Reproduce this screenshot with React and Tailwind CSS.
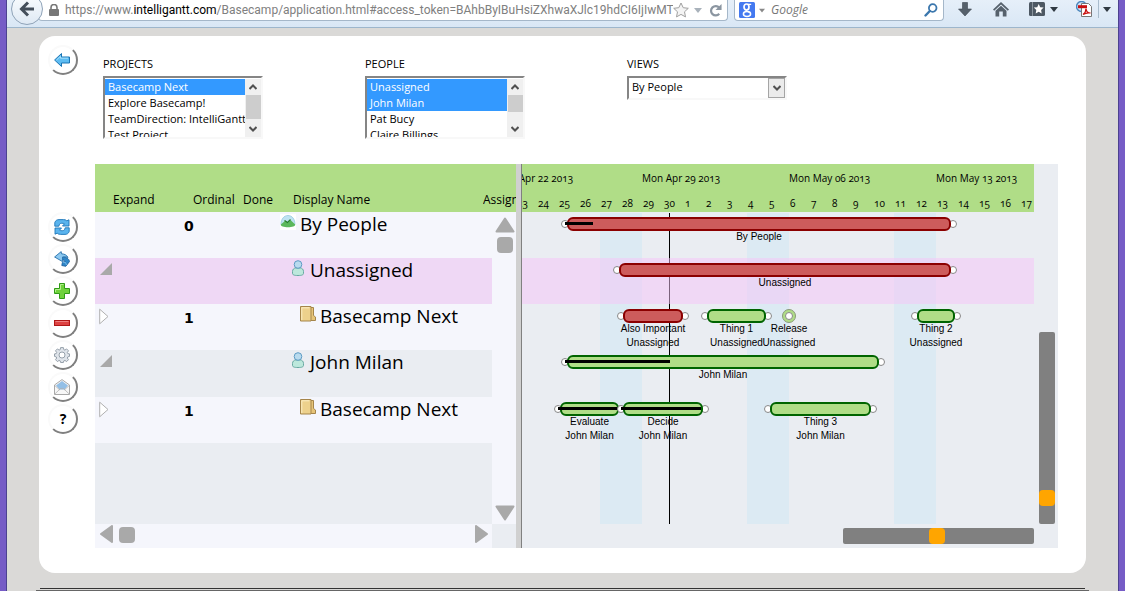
import { useState } from 'react';

const BAR_H = 14;

const projects = ['Basecamp Next', 'Explore Basecamp!', 'TeamDirection: IntelliGantt', 'Test Project'];
const people = ['Unassigned', 'John Milan', 'Pat Bucy', 'Claire Billings'];

const rows = [
  { name: 'By People', icon: 'chart', level: 0, ordinal: '0', bg: 'bg-[#f5f6fc]', height: 'h-[46px]' },
  { name: 'Unassigned', icon: 'person', level: 1, expand: 'open', bg: 'bg-[#efd8f5]', height: 'h-[46px]' },
  { name: 'Basecamp Next', icon: 'project', level: 2, ordinal: '1', expand: 'closed', bg: 'bg-[#f5f6fc]', height: 'h-[46px]' },
  { name: 'John Milan', icon: 'person', level: 1, expand: 'open', bg: 'bg-[#eaedf2]', height: 'h-[47px]' },
  { name: 'Basecamp Next', icon: 'project', level: 2, ordinal: '1', expand: 'closed', bg: 'bg-[#f5f6fc]', height: 'h-[46px]' },
];

const weeks = [
  { label: 'Mon Apr 22 2013', x: -27 },
  { label: 'Mon Apr 29 2013', x: 120 },
  { label: 'Mon May 06 2013', x: 267 },
  { label: 'Mon May 13 2013', x: 414 },
];

const days = [23, 24, 25, 26, 27, 28, 29, 30, 1, 2, 3, 4, 5, 6, 7, 8, 9, 10, 11, 12, 13, 14, 15, 16, 17];
const weekends = [78, 225, 372];

// x and width are in timeline pixels, done is the length of the progress line
const taskRows = [
  [{ name: 'By People', x: 45, width: 384, late: true, done: 28 }],
  [{ name: 'Unassigned', x: 97, width: 332, late: true }],
  [
    { name: 'Also Important', who: 'Unassigned', x: 101, width: 60, late: true },
    { name: 'Thing 1', who: 'Unassigned', x: 185, width: 59 },
    { name: 'Release', who: 'Unassigned', x: 260, width: 14, milestone: true },
    { name: 'Thing 2', who: 'Unassigned', x: 395, width: 38 },
  ],
  [{ name: 'John Milan', x: 45, width: 312, done: 105 }],
  [
    { name: 'Evaluate', who: 'John Milan', x: 38, width: 59, done: 60 },
    { name: 'Decide', who: 'John Milan', x: 101, width: 80, done: 80 },
    { name: 'Thing 3', who: 'John Milan', x: 248, width: 101 },
  ],
];

const indent = ['pl-0', 'pl-[10px]', 'pl-5'];

function Caret({ className }) {
  return (
    <svg viewBox="0 0 8 5" className={`h-[5px] w-2 ${className || ''}`} fill="currentColor">
      <path d="M0 0h8L4 5z" />
    </svg>
  );
}

function Chevron({ up }) {
  return (
    <svg viewBox="0 0 8 6" className="h-[6px] w-2" fill="none" stroke="#505050" strokeWidth="2">
      <path d={up ? 'M0.5 5 4 1.5 7.5 5' : 'M0.5 1 4 4.500 7.500 1'} />
    </svg>
  );
}

function BrowserBar() {
  return (
    <header className="flex h-7 items-start border-b border-[#9db6cc] bg-linear-to-b from-[#e6eff9] to-[#d9e7f5] pl-1 text-xs">
      <button aria-label="Back" className="z-10 -mt-[7px] flex h-8 w-8 shrink-0 items-center justify-center rounded-full border border-[#8fa3b8] bg-linear-to-b from-[#fbfdff] to-[#dfe9f4]">
        <svg viewBox="0 0 16 16" className="h-4 w-4" fill="none" stroke="#454f5b" strokeWidth="3">
          <path d="M15 8H3M9 1.500 2.500 8 9 14.500" />
        </svg>
      </button>
      <div className="-ml-[5px] flex h-[21px] min-w-0 flex-1 items-center rounded-b-sm border border-t-0 border-[#a5b7c9] bg-white pl-[10px]">
        <svg viewBox="0 0 10 12" className="mr-[6px] -mt-[1px] h-3 w-[10px] shrink-0">
          <path d="M2 6V3.500a3 3 0 0 1 6 0V6" fill="none" stroke="#777" strokeWidth="1.600" />
          <rect y="5" width="10" height="7" rx="1" fill="#777" />
        </svg>
        <div role="textbox" aria-label="Address" tabIndex={0} className="min-w-0 flex-1 overflow-hidden whitespace-nowrap font-[Roboto,sans-serif] leading-4 text-[#808080]">
          https://www.<span className="text-black">intelligantt.com</span>/Basecamp/application.html#access_token=BAhbByIBuHsiZXhwaXJlc19hdCI6IjIwMT
        </div>
        <svg viewBox="0 0 16 16" className="h-4 w-4 shrink-0" fill="#f4f4f4" stroke="#a0a0a0" strokeWidth="1">
          <path d="m8 1 2.200 4.700 5.100.6-3.800 3.500 1 5.100L8 12.400l-4.500 2.500 1-5.100L.7 6.300l5.100-.6z" />
        </svg>
        <Caret className="ml-[5px] shrink-0 text-[#a9b2bb]" />
        <svg viewBox="0 0 14 14" className="mr-[5px] ml-[7px] h-[13px] w-[13px] shrink-0" fill="none" stroke="#8b96a1" strokeWidth="2.400">
          <path d="M11 10.500A5 5 0 1 1 11 4" />
          <path d="M13.500 0v6.500H7z" fill="#8b96a1" stroke="none" />
        </svg>
      </div>
      <div className="ml-[6px] flex h-[21px] w-[210px] shrink-0 items-center rounded-b-sm border border-t-0 border-[#a5b7c9] bg-white pl-1">
        <svg viewBox="0 0 16 16" className="h-4 w-4 shrink-0">
          <rect width="16" height="16" rx="1.500" fill="#4479f0" />
          <g fill="none" stroke="#fff">
            <ellipse cx="7.500" cy="5" rx="2.500" ry="3" strokeWidth="1.700" />
            <ellipse cx="8" cy="12" rx="3.600" ry="2.400" strokeWidth="1.500" />
            <path d="M9 2.300h3.200M8 8c-2 1 1.500 1.200 2.600 2.500" strokeWidth="1.200" />
          </g>
        </svg>
        <Caret className="ml-1 w-[6px] text-[#888]" />
        <input aria-label="Search" placeholder="Google" className="ml-[6px] w-0 min-w-0 flex-1 bg-transparent font-['Open_Sans',sans-serif] text-xs italic leading-4 outline-none placeholder:text-[#777]" />
        <svg viewBox="0 0 14 14" className="mr-[5px] h-[14px] w-[14px] shrink-0" fill="none" stroke="#3b77ad" strokeLinecap="round">
          <circle cx="8.700" cy="5" r="3.800" strokeWidth="1.800" />
          <path d="M5.800 8 1.500 12.500" strokeWidth="2.400" />
        </svg>
      </div>
      <nav className="flex h-[18px] shrink-0 items-center text-[#2f3942]">
        <button aria-label="Downloads" className="ml-[14px]">
          <svg viewBox="0 0 14 15" className="h-[15px] w-[14px]" fill="#56616c" stroke="#3d4751" strokeWidth="0.600">
            <path d="M4.500.5h5v6.500h4L7 14 .5 7h4z" />
          </svg>
        </button>
        <button aria-label="Home" className="ml-[21px]">
          <svg viewBox="0 0 16 15" className="h-[15px] w-4" fill="#56616c">
            <path d="m8 0 8 7.500-1.200 1.200L8 2.400 1.200 8.700 0 7.500z" />
            <path d="m8 3.800 5.500 5V14.500h-3.700V9.500H6.200v5H2.500V8.800z" />
          </svg>
        </button>
        <button aria-label="Bookmarks" className="ml-5 flex items-center gap-[5px]">
          <svg viewBox="0 0 16 14" className="h-[14px] w-4">
            <rect width="16" height="14" rx="1.500" fill="#4d5863" />
            <path d="M3.500 0v14" stroke="#8a949d" />
            <path d="m9.700 2 1.500 3.200 3.400.4-2.500 2.400.6 3.500-3-1.700-3 1.700.6-3.500-2.500-2.400 3.400-.4z" fill="#fff" />
          </svg>
          <Caret />
        </button>
        <button aria-label="PDF tools" className="ml-[18px]">
          <svg viewBox="0 0 16 16" className="h-4 w-4">
            <circle cx="5.500" cy="5.500" r="5" fill="#cfe3f5" stroke="#4b86bd" strokeWidth="1.400" />
            <path d="M5.500 2.500h7l3 3v10h-10z" fill="#fff" stroke="#777" />
            <path d="M2 4.200h9v3H2z" fill="#c80f0f" />
            <path d="M7 13.500c2-1.500 3-4 3-6 .3 3 2.300 4.500 4.500 4.500-2.500-.5-5 0-7.500 1.500z" fill="none" stroke="#c80f0f" strokeWidth="1.200" />
          </svg>
        </button>
        <span className="ml-[6px] h-[18px] w-px bg-[#a9bccd]" />
        <button aria-label="More" className="mr-[7px] ml-1">
          <Caret />
        </button>
      </nav>
    </header>
  );
}

function ListBox({ id, label, options, selected, thumb }) {
  const [value, setValue] = useState(selected);
  return (
    <div className="w-40">
      <label htmlFor={id} className="mb-1 block leading-4">{label}</label>
      <div className="flex h-[63px] overflow-hidden border-2 border-t-[#858585] border-r-[#f8f8f8] border-b-[#f8f8f8] border-l-[#858585] bg-white pt-px">
        <select
          id={id}
          multiple
          value={value}
          onChange={(e) => setValue([...e.target.selectedOptions].map((o) => o.value))}
          className="h-16 min-w-0 flex-1 overflow-hidden text-[11px] outline-none [scrollbar-width:none]"
        >
          {options.map((o) => (
            <option
              key={o}
              className="h-4 min-h-4 py-0 pr-0 pl-[3px] leading-4 checked:bg-[linear-gradient(#3399ff,#3399ff)] checked:[-webkit-text-fill-color:#fff]"
            >
              {o}
            </option>
          ))}
        </select>
        <div className="flex w-4 flex-col items-center bg-[#f0f0f0]">
          <span className="flex h-4 items-center"><Chevron up /></span>
          <span className={`w-[15px] bg-[#cdcdcd] ${thumb}`} />
          <span className="mt-auto flex h-4 items-center"><Chevron /></span>
        </div>
      </div>
    </div>
  );
}

function ViewSelect() {
  return (
    <div className="w-40">
      <label htmlFor="views" className="mb-1 block leading-4">VIEWS</label>
      <div className="relative h-6 border-2 border-t-[#858585] border-r-[#f8f8f8] border-b-[#f8f8f8] border-l-[#858585]">
        <select id="views" className="block h-[18px] w-full appearance-none bg-white pl-[3px] text-[11px] outline-none">
          <option>By People</option>
        </select>
        <span className="pointer-events-none absolute top-0 right-0 flex h-5 w-[17px] items-center justify-center border border-[#a5a5a5] bg-[#ebebeb]">
          <Chevron />
        </span>
      </div>
    </div>
  );
}

function ToolButton({ label, children }) {
  return (
    <button
      aria-label={label}
      className="flex h-[30px] w-[30px] items-center justify-center rounded-full border-2 border-t-[#fafafa] border-r-[#808080] border-b-[#808080] border-l-[#fafafa] pr-[2px]"
    >
      {children}
    </button>
  );
}

function BackIcon() {
  return (
    <svg viewBox="0 0 16 16" className="h-4 w-4">
      <path d="M.6 8 7.500 1.500V5h8v6h-8v3.500z" fill="#5dbcf2" stroke="#1a74b4" />
      <path d="M2.500 8 6.500 4.300V6.200H14" fill="none" stroke="#a9e0fb" />
    </svg>
  );
}

function RefreshIcon() {
  return (
    <svg viewBox="0 0 16 16" className="h-4 w-4" fill="#5ab4ee" stroke="#1f76b8" strokeWidth="0.900" strokeLinejoin="round">
      <path d="M.8 7.200V3.500C1.500 1.500 3 .6 5 .6h4.500c1.500 0 2.500.4 3.300 1.200l2.200-1V7H8.500l2-2.200C9 4 6.500 4 5.500 5.200L4.800 7.200z" />
      <path d="M15.200 8.800v3.700c-.7 2-2.200 2.900-4.200 2.900H6.500c-1.500 0-2.500-.4-3.300-1.200l-2.200 1V9h6.500l-2 2.200c1.500.8 4 .8 5-.4l.7-2z" />
    </svg>
  );
}

function UndoIcon() {
  return (
    <svg viewBox="0 0 16 16" className="h-4 w-4" strokeLinejoin="round">
      <path d="M7.500 5.500c4 .3 7.500 1.800 8 5l-3.700 4.800-4-.8.7-3.500 2.500-.2c0-1.300-1.500-2-3.500-2z" fill="#2f87c9" stroke="#1c5f9c" strokeWidth="0.900" />
      <path d="M.6 6 7.200.6l.3 2.200c3 .2 5 1 6.500 3.700-2-.8-3.500-.8-5.500-.5l.2 4.700z" fill="#8cc8f0" stroke="#2670ac" strokeWidth="0.900" />
      <path d="m8.500 11.200 3 .3 1 2.500" fill="none" stroke="#7dbdea" strokeWidth="0.900" />
    </svg>
  );
}

function PlusIcon() {
  return (
    <svg viewBox="0 0 16 16" className="h-4 w-4">
      <path d="M5.500.5h5v5h5v5h-5v5h-5v-5h-5v-5h5z" fill="#6fd23c" stroke="#2f9a16" />
      <path d="M6.500 6.500v-5h3M1.500 9V6.500h5" fill="none" stroke="#b4f08e" />
    </svg>
  );
}

function MinusIcon() {
  return (
    <svg viewBox="0 0 16 16" className="h-4 w-4">
      <rect x="0.500" y="5.500" width="15" height="5" fill="#dd4242" stroke="#b01717" />
      <path d="M1.500 6.500h13" stroke="#ef8080" />
    </svg>
  );
}

function GearIcon() {
  return (
    <svg viewBox="0 0 16 16" className="h-4 w-4" fill="#dfe4ea" stroke="#8c97a3" strokeWidth="0.900" strokeLinejoin="round">
      <path d="M6.600.6h2.800l.4 2 1.100.5 1.700-1.200 1.900 1.900-1.200 1.700.5 1.100 1.700.3v2.500l-1.700.5-.5 1.100 1.200 1.700-1.900 1.900-1.700-1.200-1.100.5-.4 1.600H6.600l-.4-1.600-1.100-.5-1.700 1.200-1.900-1.900 1.200-1.700-.5-1.100L.5 9.400V6.900l1.700-.3.500-1.100-1.200-1.700 1.900-1.900 1.700 1.200 1.100-.5z" />
      <circle cx="8" cy="8" r="3" fill="#fff" />
    </svg>
  );
}

function MailIcon() {
  return (
    <svg viewBox="0 0 16 16" className="h-4 w-4">
      <path d="M.5 6 8 .6 15.500 6v9.500H.5z" fill="#f7f7f7" stroke="#a8a8a8" />
      <path d="M2 6.500 8 2l6 4.500-3.500 4h-5z" fill="#93bfe6" />
      <path d="m.8 15 5.500-5.300h3.400l5.500 5.300M.8 6.500l5 4.500M15.200 6.500l-5 4.500" fill="none" stroke="#b0b0b0" strokeWidth="0.800" />
    </svg>
  );
}

function RowIcon({ type }) {
  if (type === 'chart') {
    return (
      <svg viewBox="0 0 16 16" className="h-4 w-4">
        <rect width="16" height="16" fill="#fff" />
        <path d="M1 10.500C1 5 4 1.500 8 1.500s7 3.500 7 9z" fill="#bfe3f2" stroke="#8dc3da" strokeWidth="0.700" />
        <path d="M.8 10.500 5.500 6.500 8 8.500 10.500 6l4.700 4.500c0 2-3 2.700-7.200 2.700S.8 12.500.8 10.500z" fill="#5cb85c" />
        <path d="M4.500 6.500 7.500 8.500 10.500 5.500" fill="none" stroke="#287d2d" strokeWidth="1.200" />
      </svg>
    );
  }
  if (type === 'person') {
    return (
      <svg viewBox="0 0 16 16" className="h-4 w-4">
        <path d="M2.500 13V11.500C2.500 9.500 4 8 5.500 8h5c1.500 0 3 1.500 3 3.500V13c0 2-1.500 2.500-5.500 2.500S2.500 15 2.500 13z" fill="#bce8dc" stroke="#68a9a2" />
        <circle cx="8" cy="4.500" r="3.800" fill="#b9dbee" stroke="#5d9bc4" />
      </svg>
    );
  }
  return (
    <svg viewBox="0 0 16 16" className="h-4 w-4" strokeLinejoin="round">
      <path d="M10.500 1.500h3v8l2 1.500v3.500h-5z" fill="#e6c478" stroke="#a5854a" />
      <rect x="0.500" y="0.500" width="10.500" height="14.500" fill="#edd18c" stroke="#a5854a" />
      <path d="M1.800 14V1.800h7.500" fill="none" stroke="#fbeec3" />
    </svg>
  );
}

function ExpandIcon({ state }) {
  if (!state) return null;
  if (state === 'open') {
    return (
      <button aria-label="Collapse" className="mt-[5px] ml-[5px] block">
        <svg viewBox="0 0 12 12" className="h-3 w-3"><path d="M12 0v12H0z" fill="#a9a9a9" /></svg>
      </button>
    );
  }
  return (
    <button aria-label="Expand" className="mt-1 ml-1 block">
      <svg viewBox="0 0 10 17" className="h-[17px] w-[10px]">
        <path d="M.7 1.200 9 8.500.7 15.800z" fill="#fff" stroke="#b0b0b0" />
      </svg>
    </button>
  );
}

function ScrollArrow({ label, d, wide }) {
  return (
    <button aria-label={label} className="block">
      <svg
        viewBox={wide ? '0 0 20 16' : '0 0 13 18'}
        className={wide ? 'h-4 w-5' : 'h-[18px] w-[13px]'}
        fill="#a9a9a9" stroke="#a9a9a9" strokeWidth="2" strokeLinejoin="round"
      >
        <path d={d} />
      </svg>
    </button>
  );
}

function TaskTable() {
  return (
    <section className="w-[421px] shrink-0 overflow-hidden bg-[#eaedf2]">
      <table className="w-[421px] table-fixed border-collapse">
        <colgroup>
          <col className="w-[89px]" />
          <col className="w-[59px]" />
          <col className="w-[37px]" />
          <col className="w-[203px]" />
          <col className="w-[9px]" />
          <col className="w-6" />
        </colgroup>
        <thead>
          <tr className="h-12 bg-[#b0dd87] text-left align-bottom leading-4 whitespace-nowrap">
            <th className="p-0 pb-1 pl-[18px] font-normal">Expand</th>
            <th className="p-0 pb-1 pl-[9px] font-normal">Ordinal</th>
            <th className="p-0 pb-1 font-normal">Done</th>
            <th className="p-0 pb-1 pl-[13px] font-normal">Display Name</th>
            <th colSpan={2} className="overflow-hidden p-0 pb-1 font-normal">Assigned</th>
          </tr>
        </thead>
        <tbody className="align-top">
          {rows.map((row, i) => (
            <tr key={i} className={row.height}>
              <td className={`p-0 ${row.bg}`}><ExpandIcon state={row.expand} /></td>
              <td className={`p-0 font-['DejaVu_Sans',sans-serif] text-sm leading-7 font-bold ${row.bg}`}>{row.ordinal}</td>
              <td className={`p-0 ${row.bg}`} />
              <td colSpan={2} className={`p-0 ${row.bg}`}>
                <div className={`flex items-start gap-1 ${indent[row.level]}`}>
                  <span className="mt-[2px]"><RowIcon type={row.icon} /></span>
                  <span className="text-[19px] leading-6 whitespace-nowrap">{row.name}</span>
                </div>
              </td>
              {i === 0 && (
                <td rowSpan={6} className="bg-[#f5f6fc] p-0">
                  <div className="flex h-[312px] flex-col items-center gap-1 pt-[5px] pb-[3px] pl-px">
                    <ScrollArrow label="Scroll up" wide d="M10 1.500 18.500 14.500H1.500z" />
                    <span className="h-4 w-4 rounded-sm bg-[#a9a9a9]" />
                    <span className="mt-auto"><ScrollArrow label="Scroll down" wide d="M1.500 1.500h17L10 14.500z" /></span>
                  </div>
                </td>
              )}
            </tr>
          ))}
          <tr className="h-[81px]">
            <td colSpan={5} className="bg-[#eaedf2] p-0" />
          </tr>
        </tbody>
      </table>
      <div className="mr-6 flex h-6 items-start gap-[6px] bg-[#f5f6fc] pt-px pr-1 pl-[5px]">
        <ScrollArrow label="Scroll left" d="M12 1v16L1 9z" />
        <span className="mt-[2px] h-4 w-4 rounded-sm bg-[#a9a9a9]" />
        <span className="ml-auto"><ScrollArrow label="Scroll right" d="M1 1v16l11-8z" /></span>
      </div>
    </section>
  );
}

function Handle({ x }) {
  return <span className="absolute top-[3px] h-2 w-2 rounded-full border border-[#888] bg-white" style={{ left: x }} />;
}

function Task({ task }) {
  const { name, who, x, width, late, done, milestone } = task;
  return (
    <div className="absolute top-[5px]" style={{ left: x, width }}>
      {milestone ? (
        <div className="flex h-[14px] w-[14px] items-center justify-center rounded-full border border-[#8a9a7a] bg-[#b0dd87]">
          <span className="h-2 w-2 rounded-full border border-[#888] bg-white" />
        </div>
      ) : (
        <div className="relative" style={{ height: BAR_H }}>
          <Handle x={-6} />
          <Handle x={width - 2} />
          <div className={`absolute inset-0 rounded-md border-2 ${late ? 'border-[#8b0000] bg-[#cd5c5c]' : 'border-[#006400] bg-[#b0dd87]'}`} />
          {done && <div className="absolute top-[5px] -left-[2px] h-[3px] bg-black" style={{ width: done }} />}
        </div>
      )}
      <div className="-mt-px flex flex-col items-center font-['Liberation_Sans',Arial,sans-serif] text-[10px] leading-[14px] whitespace-nowrap">
        <div className="flex w-0 justify-center">{name}</div>
        {who && <div className="flex w-0 justify-center">{who}</div>}
      </div>
    </div>
  );
}

function Timeline() {
  return (
    <section className="flex min-w-0 flex-1 bg-[#eaedf2]">
      <div className="flex min-w-0 flex-1 flex-col">
        <div className="relative h-12 overflow-hidden bg-[#b0dd87] text-[10px] leading-4 [font-variant-numeric:oldstyle-nums]">
          {weeks.map((w) => (
            <span key={w.label} className="absolute top-[6px] whitespace-nowrap" style={{ left: w.x }}>{w.label}</span>
          ))}
          <div className="-ml-[5px] flex pt-[31px]">
            {days.map((d) => <span key={d} className="w-[21px] shrink-0">{d}</span>)}
          </div>
        </div>
        <div className="relative h-[312px] overflow-hidden">
          {weekends.map((x) => (
            <div key={x} className="absolute top-px bottom-0 w-[42px] bg-[#dceaf3]" style={{ left: x }} />
          ))}
          <div className="absolute top-px bottom-0 left-[147px] w-px bg-black" />
          {taskRows.map((tasks, i) => (
            <div key={i} className={`relative ${rows[i].height} ${i === 1 ? 'bg-[#f5c3f8]/50' : ''}`}>
              {tasks.map((t) => <Task key={t.name} task={t} />)}
            </div>
          ))}
        </div>
        <div className="flex h-6 justify-end pt-1">
          <input
            type="range"
            aria-label="Time zoom"
            defaultValue={49}
            className="h-4 w-[191px] appearance-none rounded-xs bg-[#808080] [&::-webkit-slider-thumb]:h-4 [&::-webkit-slider-thumb]:w-4 [&::-webkit-slider-thumb]:appearance-none [&::-webkit-slider-thumb]:rounded-sm [&::-webkit-slider-thumb]:bg-[#ffa500]"
          />
        </div>
      </div>
      <div className="flex w-6 flex-col items-end pt-[168px] pr-[3px]">
        <input
          type="range"
          aria-label="Row zoom"
          defaultValue={90}
          className="h-[192px] w-4 appearance-none rounded-xs bg-[#808080] [writing-mode:vertical-lr] [&::-webkit-slider-thumb]:h-4 [&::-webkit-slider-thumb]:w-4 [&::-webkit-slider-thumb]:appearance-none [&::-webkit-slider-thumb]:rounded-sm [&::-webkit-slider-thumb]:bg-[#ffa500]"
        />
      </div>
    </section>
  );
}

export default function App() {
  return (
    <div className="min-h-screen overflow-hidden border-x-[6px] border-[#765cc6] bg-[#dad9d7]">
      <div className="min-h-screen border-x border-[#4c4290] text-black font-['Open_Sans',sans-serif] text-[12px]">
        <BrowserBar />
        <main className="mx-8 mt-2 rounded-2xl bg-white pr-7 pb-[25px] pl-[9px]">
          <div className="flex h-32 items-start">
            <div className="mt-[9px]"><ToolButton label="Back"><BackIcon /></ToolButton></div>
            <div className="ml-[25px] flex gap-[102px] pt-5 text-[11px]">
              <ListBox id="projects" label="PROJECTS" options={projects} selected={['Basecamp Next']} thumb="h-6" />
              <ListBox id="people" label="PEOPLE" options={people} selected={['Unassigned', 'John Milan']} thumb="h-[17px]" />
              <ViewSelect />
            </div>
          </div>
          <div className="flex">
            <div className="mr-[17px] flex flex-col gap-[2px] pt-12">
              <ToolButton label="Refresh"><RefreshIcon /></ToolButton>
              <ToolButton label="Undo"><UndoIcon /></ToolButton>
              <ToolButton label="Add"><PlusIcon /></ToolButton>
              <ToolButton label="Remove"><MinusIcon /></ToolButton>
              <ToolButton label="Settings"><GearIcon /></ToolButton>
              <ToolButton label="Mail"><MailIcon /></ToolButton>
              <ToolButton label="Help"><span className="pl-[2px] text-sm font-bold">?</span></ToolButton>
            </div>
            <TaskTable />
            <div className="w-[6px] shrink-0 border-r border-[#808080] bg-[#d0d0d0]" />
            <Timeline />
          </div>
        </main>
        <footer className="pt-[15px]">
          <div className="mx-[33px] h-px bg-[#333]" />
          <div className="mx-[29px] mt-px h-px bg-[#666]" />
        </footer>
      </div>
    </div>
  );
}
